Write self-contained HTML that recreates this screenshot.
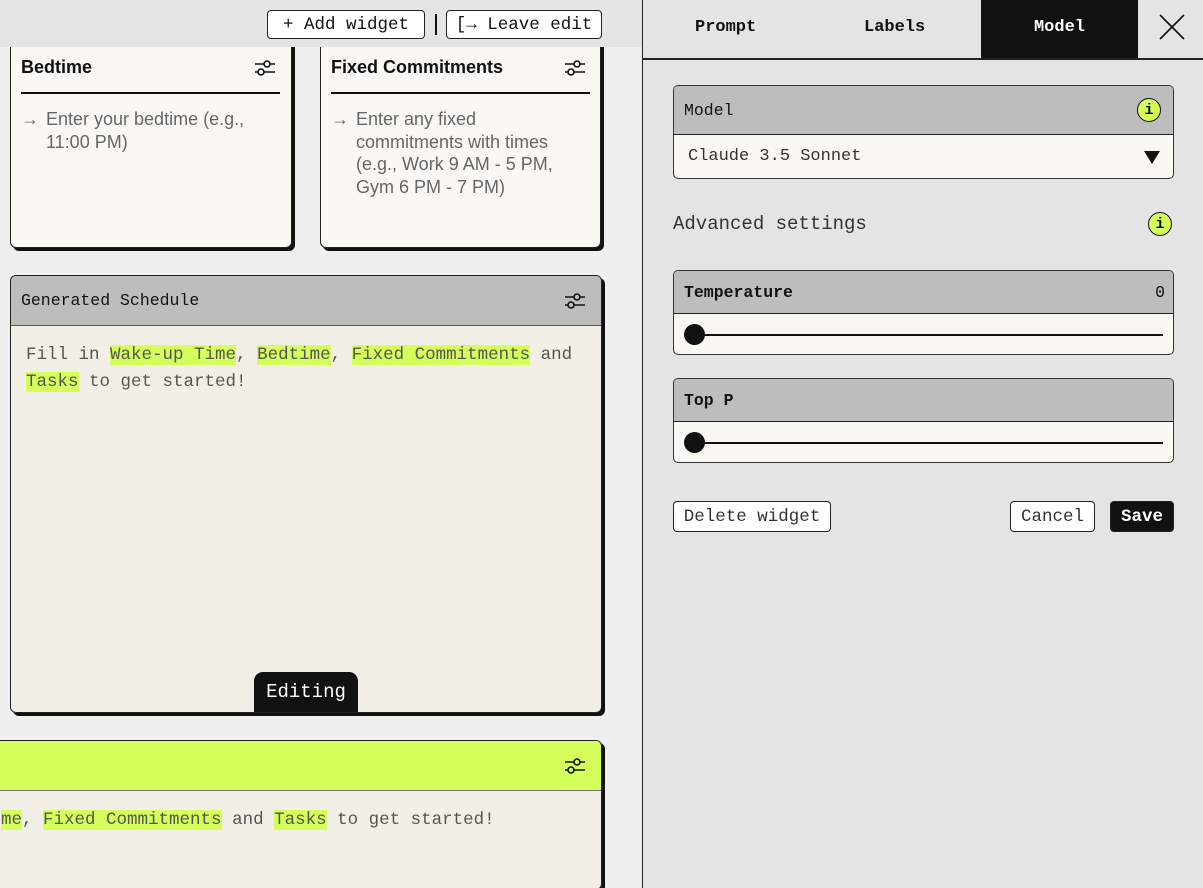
<!DOCTYPE html>
<html style="width:1203px;height:888px;overflow:hidden"><head><style>
*{box-sizing:border-box;margin:0;padding:0}
body{width:1203px;height:888px;overflow:hidden;background:#efefef;font-family:"Liberation Mono",monospace;position:relative;color:#111}
.abs{position:absolute}
.sans{font-family:"Liberation Sans",sans-serif}
.card{position:absolute;border:1.5px solid #222;border-radius:6px;box-shadow:3px 3px 0 #111;overflow:hidden}
.hl{background:#d4ff5a}
.btn{position:absolute;border:1.5px solid #222;border-radius:4px;background:#fff;font-size:17.5px;display:flex;align-items:center;justify-content:center}
.box{position:absolute;left:673px;width:501px;border:1.5px solid #333;border-radius:5px;overflow:hidden;background:#f9f8f3}
.bh{background:#bdbdbd;border-bottom:1.5px solid #222;padding-left:10px;display:flex;align-items:center;font-size:16.5px;font-weight:bold}
.info{position:absolute;width:24px;height:24px;border:1.5px solid #111;border-radius:50%;background:#d4ff5a;font-size:15px;font-weight:bold;display:flex;align-items:center;justify-content:center}
.slider{position:relative;height:40px}
.slider .ln{position:absolute;left:20px;right:10px;top:20px;height:1.5px;background:#111}
.slider .dot{position:absolute;left:10px;top:10px;width:21px;height:21px;border-radius:50%;background:#111}
.ph{position:absolute;left:10px;top:87px;font-size:18px;color:#666;line-height:22.5px;padding-left:25px}
.ph b{position:absolute;left:0;top:0;font-weight:normal}
</style></head><body>
<div class="card" style="left:10px;top:20px;width:282px;height:228px;background:#f9f8f3">
 <div class="abs sans" style="left:10px;top:36px;font-size:18px;font-weight:bold">Bedtime</div>
 <div class="abs" style="left:10px;top:71px;width:259px;height:1.5px;background:#111"></div>
 <div class="ph sans" style="width:245px"><b>→</b>Enter your bedtime (e.g., 11:00 PM)</div>
</div>
<div class="card" style="left:320px;top:20px;width:281px;height:228px;background:#f9f8f3">
 <div class="abs sans" style="left:10px;top:36px;font-size:18px;font-weight:bold">Fixed Commitments</div>
 <div class="abs" style="left:10px;top:71px;width:259px;height:1.5px;background:#111"></div>
 <div class="ph sans" style="width:245px"><b>→</b>Enter any fixed commitments with times (e.g., Work 9 AM - 5 PM, Gym 6 PM - 7 PM)</div>
</div>
<div class="abs" style="left:0;top:0;width:642px;height:47px;background:#e4e4e4"></div>
<div class="btn" style="left:267px;top:10px;width:158px;height:29px">+ Add widget</div>
<div class="abs" style="left:435px;top:14px;width:1.5px;height:21px;background:#111"></div>
<div class="btn" style="left:446px;top:10px;width:156px;height:29px">[→ Leave edit</div>

<div class="card" style="left:10px;top:275px;width:592px;height:438px;background:#f2f0e6">
 <div style="height:50px;background:#bdbdbd;border-bottom:1.5px solid #555;padding-left:10px;display:flex;align-items:center;font-size:16.5px">Generated Schedule</div>
 <div style="padding:16px 15px;font-size:17.5px;line-height:27px;color:#555">Fill in <span class="hl">Wake-up Time</span>, <span class="hl">Bedtime</span>, <span class="hl">Fixed Commitments</span> and <span class="hl">Tasks</span> to get started!</div>
 <div class="abs" style="left:243px;top:396px;width:104px;height:40px;background:#111;border-radius:9px 9px 0 0;color:#fff;font-size:19px;display:flex;align-items:center;justify-content:center">Editing</div>
</div>
<div class="card" style="left:-10px;top:740px;width:612px;height:150px;background:#f2f0e6">
 <div style="height:50px;background:#d4ff5a;border-bottom:1.5px solid #777"></div>
 <div style="padding:16px 0 0 10px;font-size:17.5px;line-height:27px;color:#555"><span class="hl">me</span>, <span class="hl">Fixed Commitments</span> and <span class="hl">Tasks</span> to get started!</div>
</div>
<svg class="abs" style="left:254px;top:58px" width="22" height="20" viewBox="0 0 22 20" fill="none" stroke="#111" stroke-width="1.6"><path d="M1 6H10M16 6H21M1 14H4M10 14H21"/><circle cx="13" cy="6" r="3"/><circle cx="7" cy="14" r="3"/></svg>
<svg class="abs" style="left:564px;top:58px" width="22" height="20" viewBox="0 0 22 20" fill="none" stroke="#111" stroke-width="1.6"><path d="M1 6H10M16 6H21M1 14H4M10 14H21"/><circle cx="13" cy="6" r="3"/><circle cx="7" cy="14" r="3"/></svg>
<svg class="abs" style="left:564px;top:291px" width="22" height="20" viewBox="0 0 22 20" fill="none" stroke="#111" stroke-width="1.6"><path d="M1 6H10M16 6H21M1 14H4M10 14H21"/><circle cx="13" cy="6" r="3"/><circle cx="7" cy="14" r="3"/></svg>
<svg class="abs" style="left:564px;top:756px" width="22" height="20" viewBox="0 0 22 20" fill="none" stroke="#111" stroke-width="1.6"><path d="M1 6H10M16 6H21M1 14H4M10 14H21"/><circle cx="13" cy="6" r="3"/><circle cx="7" cy="14" r="3"/></svg>

<div class="abs" style="left:642px;top:0;width:561px;height:888px;background:#e4e4e4;border-left:1.5px solid #222"></div>
<div class="abs" style="left:642px;top:58px;width:561px;height:1.5px;background:#222"></div>
<div class="abs" style="left:695px;top:18px;font-size:17px;font-weight:bold;line-height:20px">Prompt</div>
<div class="abs" style="left:864px;top:18px;font-size:17px;font-weight:bold;line-height:20px">Labels</div>
<div class="abs" style="left:981px;top:0;width:157px;height:58px;background:#111;color:#fff;font-size:17px;font-weight:bold;line-height:20px;padding-top:18px;text-align:center">Model</div>
<svg class="abs" style="left:1159px;top:14px" width="26" height="26" viewBox="0 0 26 26" stroke="#111" stroke-width="1.6"><path d="M1 1L25 25M25 1L1 25"/></svg>

<div class="box" style="top:85px;height:94px">
 <div class="bh" style="height:49px;font-weight:normal">Model</div>
 <div style="height:43px;padding-left:14px;display:flex;align-items:center;font-size:17px;color:#333">Claude 3.5 Sonnet</div>
 <div class="abs" style="right:13px;top:65px;width:0;height:0;border-left:8px solid transparent;border-right:8px solid transparent;border-top:13px solid #111"></div>
</div>
<div class="info" style="left:1137px;top:98px">i</div>
<div class="abs" style="left:673px;top:213px;font-size:19px;color:#333">Advanced settings</div>
<div class="info" style="left:1148px;top:212px">i</div>

<div class="box" style="top:270px;height:85px">
 <div class="bh" style="height:43px">Temperature<span style="margin-left:auto;margin-right:8px;font-weight:normal">0</span></div>
 <div class="slider"><div class="ln"></div><div class="dot"></div></div>
</div>
<div class="box" style="top:378px;height:85px">
 <div class="bh" style="height:43px">Top P</div>
 <div class="slider"><div class="ln"></div><div class="dot"></div></div>
</div>

<div class="btn" style="left:673px;top:501px;width:158px;height:31px;color:#333">Delete widget</div>
<div class="btn" style="left:1010px;top:501px;width:85px;height:31px;color:#333">Cancel</div>
<div class="btn" style="left:1110px;top:501px;width:64px;height:31px;background:#111;color:#fff;font-weight:bold">Save</div>
</body></html>
